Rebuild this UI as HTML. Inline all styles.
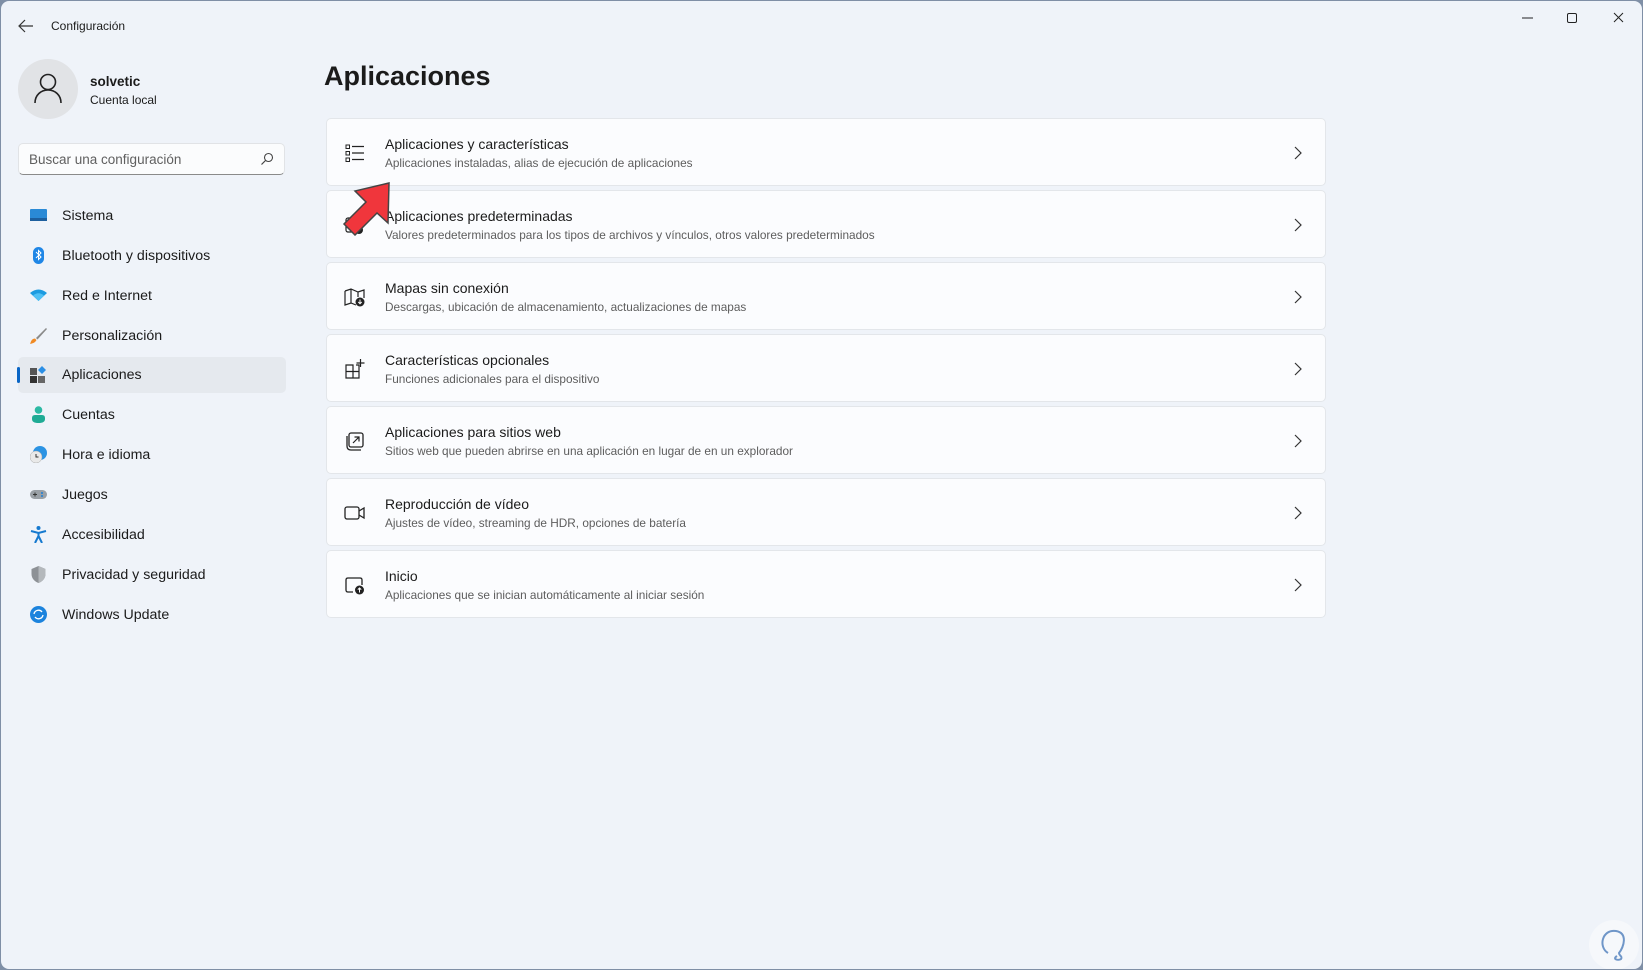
<!DOCTYPE html>
<html><head><meta charset="utf-8"><style>
*{margin:0;padding:0;box-sizing:border-box}
body{width:1643px;height:970px;background:#7f8fa6;font-family:"Segoe UI","Liberation Sans",sans-serif;color:#1b1b1b;overflow:hidden;position:relative}
.win{position:absolute;left:1px;top:1px;width:1641px;height:968px;background:#eff3f9;border-radius:8px;overflow:hidden}
.abs{position:absolute}
.nav{position:absolute;left:17px;width:268px;height:36px;border-radius:5px}
.nav .ic{position:absolute;left:12px;top:9px;width:17px;height:17px}
.nav span{position:absolute;left:44px;top:10px;font-size:14.2px;color:#1b1b1b}
.card{position:absolute;left:325px;width:1000px;height:68px;background:#fbfcfe;border:1px solid #e3e6ea;border-radius:5px}
.card .ti{position:absolute;left:58px;top:17px;font-size:14px;color:#1b1b1b}
.card .su{position:absolute;left:58px;top:37px;font-size:11.8px;color:#5d5d5d}
.card svg.i{position:absolute;left:17px;top:23px;width:22px;height:22px}
.card .ch{position:absolute;left:966px;top:27px}
</style></head><body><div class="win">
<svg class="abs" style="left:17px;top:18px" width="16" height="14" viewBox="0 0 16 14"><path d="M15 7H2M7 1L1 7l6 6" fill="none" stroke="#333" stroke-width="1.2"/></svg>
<div class="abs" style="left:50px;top:18px;font-size:12px">Configuración</div>
<svg class="abs" style="left:1520px;top:10px" width="120" height="16"><path d="M1 7h11" stroke="#222" stroke-width="1"/><rect x="46.5" y="2.5" width="9" height="9" rx="1.5" fill="none" stroke="#222"/><path d="M93 2l9 9M102 2l-9 9" stroke="#222"/></svg>
<div class="abs" style="left:17px;top:58px;width:60px;height:60px;border-radius:50%;background:#e1e3e6"></div>
<svg class="abs" style="left:32px;top:71px" width="30" height="32" viewBox="0 0 30 32"><circle cx="15" cy="10" r="7.5" fill="none" stroke="#222" stroke-width="1.6"/><path d="M2 31c0-8 6-13 13-13s13 5 13 13" fill="none" stroke="#222" stroke-width="1.6"/></svg>
<div class="abs" style="left:89px;top:73px;font-size:13.5px;font-weight:bold">solvetic</div>
<div class="abs" style="left:89px;top:92px;font-size:12px">Cuenta local</div>
<div class="abs" style="left:17px;top:142px;width:267px;height:32px;background:#fbfcfd;border:1px solid #e1e3e6;border-bottom:1px solid #8a8a8a;border-radius:5px"></div>
<div class="abs" style="left:28px;top:151px;font-size:13.5px;color:#5f5f5f">Buscar una configuración</div>
<svg class="abs" style="left:259px;top:151px" width="14" height="14"><circle cx="8.5" cy="5.5" r="4" fill="none" stroke="#444" stroke-width="1.1"/><path d="M5.5 8.5L1.5 12.5" stroke="#444" stroke-width="1.2"/></svg>

<div class="nav" style="top:197px"><svg class="ic" viewBox="0 0 17 17"><rect x="0" y="2" width="17" height="12" rx="1" fill="#2a8ad6"/><rect x="0" y="11" width="17" height="3" fill="#1d5f9e"/></svg><span>Sistema</span></div>
<div class="nav" style="top:237px"><svg class="ic" viewBox="0 0 17 17"><rect x="3" y="0" width="11" height="17" rx="5.5" fill="#1f86e6"/><path d="M6 5l5 5-2.5 2.5V3.5L11 6 6 11" fill="none" stroke="#fff" stroke-width="1"/></svg><span>Bluetooth y dispositivos</span></div>
<div class="nav" style="top:277px"><svg class="ic" viewBox="0 0 17 17"><path d="M0 6Q8.5-1 17 6L8.5 14z" fill="#1d9be0"/><path d="M3 8.5Q8.5 4 14 8.5L8.5 14z" fill="#4fc0f5"/></svg><span>Red e Internet</span></div>
<div class="nav" style="top:317px"><svg class="ic" viewBox="0 0 17 17"><path d="M16 1L6 11l1.5 1.5L17 2z" fill="#8a8a8a"/><path d="M5 11.5l1.5 1.5C5 16 2 16.5 0 17c1-2 1-5 5-5.5z" fill="#f08a24"/></svg><span>Personalización</span></div>
<div class="nav" style="top:356px;background:#e5e9ee"><div class="abs" style="left:-1px;top:10px;width:3px;height:16px;border-radius:2px;background:#0a66c6"></div><svg class="ic" viewBox="0 0 17 17"><rect x="0" y="2" width="7" height="7" fill="#555"/><rect x="0" y="10" width="7" height="7" fill="#333"/><rect x="8" y="10" width="7" height="7" fill="#666"/><path d="M12 0l4 4-4 4-4-4z" fill="#2b8fe5"/></svg><span>Aplicaciones</span></div>
<div class="nav" style="top:396px"><svg class="ic" viewBox="0 0 17 17"><circle cx="8.5" cy="4" r="3.8" fill="#2cb9a4"/><path d="M2 12q0-3 3-3h7q3 0 3 3v1q0 4-6.5 4T2 13z" fill="#1fab95"/></svg><span>Cuentas</span></div>
<div class="nav" style="top:436px"><svg class="ic" viewBox="0 0 17 17"><circle cx="10" cy="7" r="7" fill="#2b93e3"/><circle cx="6" cy="11" r="6" fill="#e9e9e9" stroke="#aaa" stroke-width=".5"/><path d="M6 8v3h2.5" stroke="#333" fill="none"/></svg><span>Hora e idioma</span></div>
<div class="nav" style="top:476px"><svg class="ic" viewBox="0 0 17 17"><rect x="0" y="4" width="17" height="9" rx="4.5" fill="#9aa0a6"/><path d="M3 8.5h4M5 6.5v4" stroke="#333"/><circle cx="12" cy="7" r="1" fill="#1e7fd6"/><circle cx="12" cy="10" r="1" fill="#1e7fd6"/></svg><span>Juegos</span></div>
<div class="nav" style="top:516px"><svg class="ic" viewBox="0 0 17 17"><circle cx="8.5" cy="2" r="2" fill="#1579cf"/><path d="M1 5l7.5 2 7.5-2M8.5 7v3l-3.5 7M8.5 10l3.5 7" stroke="#1579cf" stroke-width="2" fill="none"/></svg><span>Accesibilidad</span></div>
<div class="nav" style="top:556px"><svg class="ic" viewBox="0 0 17 17"><path d="M8.5 0l7 3v5c0 5-4 8-7 9-3-1-7-4-7-9V3z" fill="#8d9196"/><path d="M8.5 0v17c3-1 7-4 7-9V3z" fill="#b4b8bc"/></svg><span>Privacidad y seguridad</span></div>
<div class="nav" style="top:596px"><svg class="ic" viewBox="0 0 17 17"><circle cx="8.5" cy="8.5" r="8.5" fill="#1c83dd"/><path d="M4 8a4.5 4.5 0 0 1 8-2M13 9a4.5 4.5 0 0 1-8 2" stroke="#fff" stroke-width="1.3" fill="none"/></svg><span>Windows Update</span></div>

<div class="abs" style="left:323px;top:60px;font-size:27px;font-weight:600">Aplicaciones</div>

<div class="card" style="top:117px"><svg class="i" viewBox="0 0 22 22"><rect x="2" y="3" width="3.5" height="3.5" fill="none" stroke="#222"/><rect x="2" y="9.5" width="3.5" height="3.5" fill="none" stroke="#222"/><rect x="2" y="16" width="3.5" height="3.5" fill="none" stroke="#222"/><path d="M8 4.5h12M8 11h12M8 17.5h12" stroke="#222" stroke-width="1.2"/></svg><div class="ti">Aplicaciones y características</div><div class="su">Aplicaciones instaladas, alias de ejecución de aplicaciones</div><svg class="ch" width="10" height="14"><path d="M2 1l6 6-6 6" fill="none" stroke="#333" stroke-width="1.2"/></svg></div>
<div class="card" style="top:189px"><svg class="i" viewBox="0 0 22 22"><rect x="2" y="4" width="15" height="14" rx="2" fill="none" stroke="#222" stroke-width="1.2"/><circle cx="15" cy="16" r="4" fill="#222"/></svg><div class="ti">Aplicaciones predeterminadas</div><div class="su">Valores predeterminados para los tipos de archivos y vínculos, otros valores predeterminados</div><svg class="ch" width="10" height="14"><path d="M2 1l6 6-6 6" fill="none" stroke="#333" stroke-width="1.2"/></svg></div>
<div class="card" style="top:261px"><svg class="i" viewBox="0 0 22 22"><path d="M1 5l6-2 7 3 6-2v8M1 5v14l6-2 5 2M7 3v14M14 6v5" fill="none" stroke="#222" stroke-width="1.2"/><circle cx="16" cy="16" r="4.5" fill="#222"/><path d="M16 13.5v4M14.3 16l1.7 1.8 1.7-1.8" stroke="#fff" fill="none"/></svg><div class="ti">Mapas sin conexión</div><div class="su">Descargas, ubicación de almacenamiento, actualizaciones de mapas</div><svg class="ch" width="10" height="14"><path d="M2 1l6 6-6 6" fill="none" stroke="#333" stroke-width="1.2"/></svg></div>
<div class="card" style="top:333px"><svg class="i" viewBox="0 0 22 22"><path d="M2 7h7v13H2zM2 13.5h13V20H9M15 13.5V7h-3" fill="none" stroke="#222" stroke-width="1.2"/><path d="M16.5 1v8M12.5 5h8" stroke="#222" stroke-width="1.2"/></svg><div class="ti">Características opcionales</div><div class="su">Funciones adicionales para el dispositivo</div><svg class="ch" width="10" height="14"><path d="M2 1l6 6-6 6" fill="none" stroke="#333" stroke-width="1.2"/></svg></div>
<div class="card" style="top:405px"><svg class="i" viewBox="0 0 22 22"><rect x="5" y="3" width="14" height="14" rx="2" fill="none" stroke="#222" stroke-width="1.3"/><path d="M3 6v10q0 4 4 4h10" fill="none" stroke="#222" stroke-width="1.3"/><path d="M9 13l6-6M10.5 7H15v4.5" fill="none" stroke="#222" stroke-width="1.2"/></svg><div class="ti">Aplicaciones para sitios web</div><div class="su">Sitios web que pueden abrirse en una aplicación en lugar de en un explorador</div><svg class="ch" width="10" height="14"><path d="M2 1l6 6-6 6" fill="none" stroke="#333" stroke-width="1.2"/></svg></div>
<div class="card" style="top:477px"><svg class="i" viewBox="0 0 22 22"><rect x="1" y="5" width="14" height="12" rx="2" fill="none" stroke="#222" stroke-width="1.3"/><path d="M15 9l5-3v10l-5-3" fill="none" stroke="#222" stroke-width="1.3"/></svg><div class="ti">Reproducción de vídeo</div><div class="su">Ajustes de vídeo, streaming de HDR, opciones de batería</div><svg class="ch" width="10" height="14"><path d="M2 1l6 6-6 6" fill="none" stroke="#333" stroke-width="1.2"/></svg></div>
<div class="card" style="top:549px"><svg class="i" viewBox="0 0 22 22"><path d="M9 18H4q-2 0-2-2V6q0-2 2-2h12q2 0 2 2v5" fill="none" stroke="#222" stroke-width="1.3"/><circle cx="15.5" cy="16" r="4.5" fill="#222"/><path d="M15.5 18.5v-4.5M13.8 15.6l1.7-1.7 1.7 1.7" stroke="#fff" fill="none"/></svg><div class="ti">Inicio</div><div class="su">Aplicaciones que se inician automáticamente al iniciar sesión</div><svg class="ch" width="10" height="14"><path d="M2 1l6 6-6 6" fill="none" stroke="#333" stroke-width="1.2"/></svg></div>

<svg class="abs" style="left:340px;top:180px" width="52" height="55" viewBox="0 0 52 55"><path d="M48 2L47 42 36 32 14 54 3 43 25 21 14 10z" fill="#f0363c" stroke="#444" stroke-width="1.5"/></svg>
<svg class="abs" style="left:1587px;top:917px" width="52" height="52" viewBox="0 0 52 52"><circle cx="26" cy="27" r="25" fill="#f6f8fb"/><path d="M20 35c-10-6-6-24 8-22 12 2 8 16 3 22 0 3 4 3 2 6-3 2-9 0-4-3" fill="none" stroke="#6f96c8" stroke-width="2"/></svg>
</div></body></html>
